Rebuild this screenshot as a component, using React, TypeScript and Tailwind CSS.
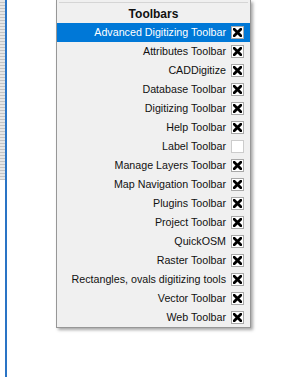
const toolbars: { name: string; checked: boolean }[] = [
  { name: "Advanced Digitizing Toolbar", checked: true },
  { name: "Attributes Toolbar", checked: true },
  { name: "CADDigitize", checked: true },
  { name: "Database Toolbar", checked: true },
  { name: "Digitizing Toolbar", checked: true },
  { name: "Help Toolbar", checked: true },
  { name: "Label Toolbar", checked: false },
  { name: "Manage Layers Toolbar", checked: true },
  { name: "Map Navigation Toolbar", checked: true },
  { name: "Plugins Toolbar", checked: true },
  { name: "Project Toolbar", checked: true },
  { name: "QuickOSM", checked: true },
  { name: "Raster Toolbar", checked: true },
  { name: "Rectangles, ovals digitizing tools", checked: true },
  { name: "Vector Toolbar", checked: true },
  { name: "Web Toolbar", checked: true },
]

function CheckBox({ checked }: { checked: boolean }) {
  return (
    <span
      className={
        "flex h-[13px] w-[13px] items-center justify-center border bg-white " +
        (checked ? "border-[#a8a8a8]" : "border-[#cccccc]")
      }
    >
      {checked && (
        <svg width="9" height="9" viewBox="0 0 9 9">
          <path d="M1.2 1.2L7.8 7.8M7.8 1.2L1.2 7.8" stroke="#000" strokeWidth="2.8" strokeLinecap="square" />
        </svg>
      )}
    </span>
  )
}

export default function App() {
  return (
    <div className="flex h-[377px] w-[303px] bg-white font-['Liberation_Sans',sans-serif] text-[10.7px] text-[#111]">
      <div className="flex h-full">
        <div className="h-[180px] w-[5px] bg-[repeating-linear-gradient(to_bottom,#e6e6e6_0px,#e6e6e6_2px,#c4c4c4_2px,#c4c4c4_3px)]" />
        <div className="h-full w-[2px] bg-[#2a74c5]" />
      </div>

      <div className="ml-[49px] h-[328px] w-[195px] border-x border-b border-[#979797] bg-[#f0f0f0] shadow-[2px_2px_3px_rgba(0,0,0,0.35)]">
        <div className="mx-[2px] mt-[2px] h-px bg-[#d5d5d5]" />
        <div className="flex h-[20px] items-center justify-center pt-[1px] text-[12px] font-bold">Toolbars</div>
        <ul>
          {toolbars.map((t, i) => (
            <li
              key={t.name}
              className={
                "flex h-[19px] items-center justify-end gap-[5px] pr-[6px] " +
                (i === 0 ? "bg-[#0078d7] text-white" : "")
              }
            >
              <span>{t.name}</span>
              <CheckBox checked={t.checked} />
            </li>
          ))}
        </ul>
      </div>
    </div>
  )
}
